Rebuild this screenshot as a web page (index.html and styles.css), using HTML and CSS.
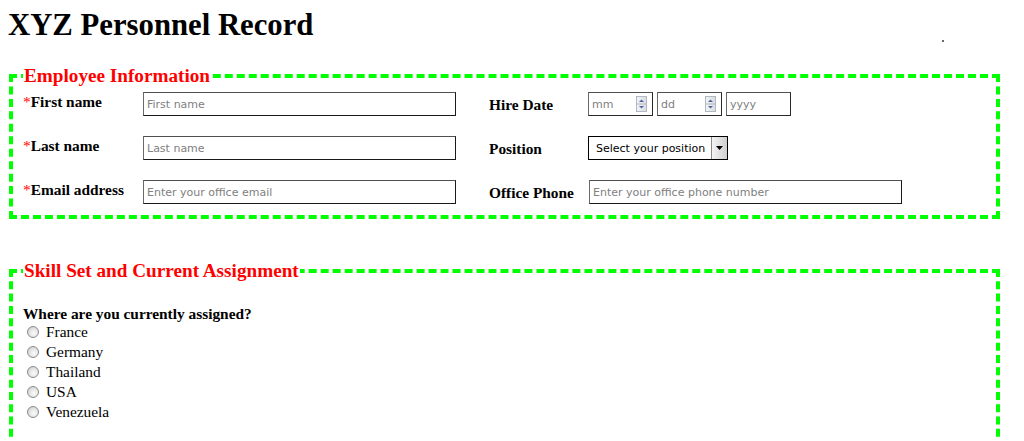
FILE: index.html
```html
<!DOCTYPE html>
<html lang="en">
<head>
<meta charset="utf-8">
<title>XYZ Personnel Record</title>
<link rel="stylesheet" href="styles.css">
</head>
<body>
<h1 class="title">XYZ Personnel Record</h1>
<span class="pixel"></span>
<form class="record">
  <fieldset class="group group-employee">
    <legend class="group-title">Employee Information</legend>
    <div class="emp-grid">
      <label class="lbl lbl-left"><span class="req">*</span>First name</label>
      <input class="field" type="text" placeholder="First name">
      <label class="lbl lbl-right">Hire Date</label>
      <div class="date-row">
        <div class="spin-box">
          <input class="spin-input" type="text" placeholder="mm">
          <span class="spinner"><svg width="11" height="16" viewBox="0 0 11 16"><defs><linearGradient id="sg1" x1="0" y1="0" x2="1" y2="0"><stop offset="0" stop-color="#f4f5f8"/><stop offset="1" stop-color="#d9dce3"/></linearGradient></defs><rect x="0.5" y="0.5" width="10" height="15" fill="url(#sg1)" stroke="#b4b8c2"/><line x1="1" y1="8" x2="10" y2="8" stroke="#b4b8c2"/><path d="M3 6 L5.5 3.5 L8 6 Z" fill="#4f6a9a"/><path d="M3 10 L5.5 12.5 L8 10 Z" fill="#4f6a9a"/></svg></span>
        </div>
        <div class="spin-box">
          <input class="spin-input" type="text" placeholder="dd">
          <span class="spinner"><svg width="11" height="16" viewBox="0 0 11 16"><defs><linearGradient id="sg2" x1="0" y1="0" x2="1" y2="0"><stop offset="0" stop-color="#f4f5f8"/><stop offset="1" stop-color="#d9dce3"/></linearGradient></defs><rect x="0.5" y="0.5" width="10" height="15" fill="url(#sg2)" stroke="#b4b8c2"/><line x1="1" y1="8" x2="10" y2="8" stroke="#b4b8c2"/><path d="M3 6 L5.5 3.5 L8 6 Z" fill="#4f6a9a"/><path d="M3 10 L5.5 12.5 L8 10 Z" fill="#4f6a9a"/></svg></span>
        </div>
        <div class="spin-box">
          <input class="spin-input" type="text" placeholder="yyyy">
        </div>
      </div>

      <label class="lbl lbl-left"><span class="req">*</span>Last name</label>
      <input class="field" type="text" placeholder="Last name">
      <label class="lbl lbl-right">Position</label>
      <div class="select-box">
        <select class="select">
          <option>Select your position</option>
        </select>
        <span class="select-btn"><svg width="7" height="4" viewBox="0 0 7 4"><path d="M0 0 H7 L3.5 4 Z" fill="#000"/></svg></span>
      </div>

      <label class="lbl lbl-left"><span class="req">*</span>Email address</label>
      <input class="field" type="text" placeholder="Enter your office email">
      <label class="lbl lbl-right">Office Phone</label>
      <input class="field field-phone" type="text" placeholder="Enter your office phone number">
    </div>
  </fieldset>

  <fieldset class="group group-skills">
    <legend class="group-title">Skill Set and Current Assignment</legend>
    <p class="question">Where are you currently assigned?</p>
    <label class="radio-row"><input class="radio" type="radio" name="loc"><span>France</span></label>
    <label class="radio-row"><input class="radio" type="radio" name="loc"><span>Germany</span></label>
    <label class="radio-row"><input class="radio" type="radio" name="loc"><span>Thailand</span></label>
    <label class="radio-row"><input class="radio" type="radio" name="loc"><span>USA</span></label>
    <label class="radio-row"><input class="radio" type="radio" name="loc"><span>Venezuela</span></label>
  </fieldset>
</form>
</body>
</html>
```

FILE: styles.css
```css
html, body {
  background: #ffffff;
}

body {
  margin: 8px;
  font-family: "Liberation Serif", "Times New Roman", serif;
  font-size: 15.36px;
  line-height: 17px;
  color: #000;
  position: relative;
}

.title {
  margin: 0 0 23px 0;
  font-size: 30.72px;
  line-height: 34px;
  font-weight: bold;
}

.pixel {
  position: absolute;
  left: 934px;
  top: 32px;
  width: 2px;
  height: 2px;
  background: #6a6a6a;
}

.record {
  margin: 0;
}

.group {
  margin: 0 16px 0 1px;
  border: 4px dashed #00ff00;
  padding: 6px 10px 11px 10px;
  min-width: 0;
}

.group-title {
  color: #ff0000;
  font-weight: bold;
  font-size: 19.2px;
  line-height: 21px;
  padding: 0 1px;
  margin-left: 0;
}

.group-skills {
  margin-top: 41px;
  padding-bottom: 60px;
}

.emp-grid {
  display: grid;
  grid-template-columns: 120px 346px 99px 1fr;
  grid-template-rows: 24px 24px 24px;
  row-gap: 20px;
}

.lbl {
  font-weight: bold;
  white-space: nowrap;
}

.lbl-left {
  align-self: start;
  padding-top: 1px;
}

.lbl-right {
  align-self: center;
}

.req {
  color: #ff0000;
  font-weight: normal;
}

.field {
  box-sizing: border-box;
  width: 313px;
  height: 24px;
  margin: 0;
  padding: 0 3px;
  border: 1px solid #1a1a1a;
  border-top-color: #505050;
  border-left-color: #6a6a6a;
  font-family: "DejaVu Sans", Tahoma, sans-serif;
  font-size: 11px;
  background: #fff;
  outline: none;
}

.field::placeholder,
.spin-input::placeholder {
  color: #808080;
  opacity: 1;
}

.field-phone {
  margin-left: 1px;
}

.date-row {
  display: flex;
  gap: 4px;
  align-items: stretch;
}

.spin-box {
  box-sizing: border-box;
  width: 65px;
  height: 24px;
  display: flex;
  align-items: center;
  border: 1px solid #2a2a2a;
  border-top-color: #505050;
  border-left-color: #6a6a6a;
  background: #fff;
  padding-right: 5px;
}

.spin-box:last-child {
  padding-right: 0;
}

.spin-input {
  flex: 1;
  min-width: 0;
  width: 0;
  border: none;
  margin: 0;
  padding: 0 3px;
  height: 100%;
  font-family: "DejaVu Sans", Tahoma, sans-serif;
  font-size: 11px;
  background: transparent;
  outline: none;
}

.spinner {
  display: flex;
  width: 11px;
  height: 16px;
}

.select-box {
  box-sizing: border-box;
  width: 140px;
  height: 24px;
  display: flex;
  align-items: stretch;
  border: 1px solid #000;
  background: #fff;
  align-self: start;
}

.select {
  appearance: none;
  -webkit-appearance: none;
  flex: 1;
  min-width: 0;
  border: none;
  margin: 0;
  padding: 0 0 0 7px;
  font-family: "DejaVu Sans", Tahoma, sans-serif;
  font-size: 11px;
  color: #000;
  background: transparent;
  outline: none;
}

.select-btn {
  box-sizing: border-box;
  width: 16px;
  display: flex;
  align-items: center;
  justify-content: center;
  border-left: 1px solid #8a8a8a;
  background: linear-gradient(to right, #f3f3f3, #cfcfcf);
}

.question {
  margin: 18px 0 0 0;
  font-weight: bold;
}

.radio-row {
  display: flex;
  align-items: center;
  height: 20px;
  line-height: 20px;
}

.radio {
  appearance: none;
  -webkit-appearance: none;
  box-sizing: border-box;
  width: 12px;
  height: 12px;
  margin: 0 7px 0 4px;
  border: 1px solid #8c8c8c;
  border-radius: 50%;
  background: radial-gradient(circle at 60% 62%, #fbfbfb 0, #e6e6e6 45%, #c4c4c4 100%);
}
```
